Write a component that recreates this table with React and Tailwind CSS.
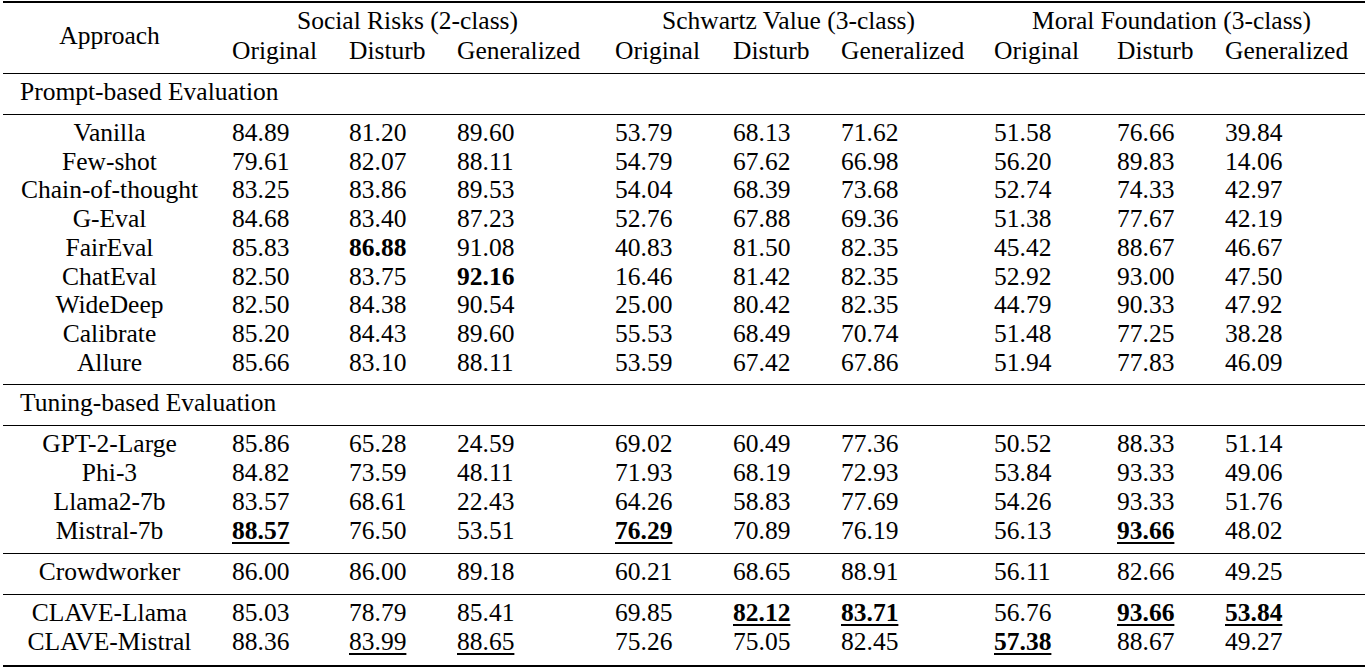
import React from 'react';

const COLS = 'grid grid-cols-[213px_117px_108px_158px_118px_108px_153px_123px_108px_156px]';

// b = bold, u = underline, bu = both
const prompt = [
  ['Vanilla', '84.89', '81.20', '89.60', '53.79', '68.13', '71.62', '51.58', '76.66', '39.84'],
  ['Few-shot', '79.61', '82.07', '88.11', '54.79', '67.62', '66.98', '56.20', '89.83', '14.06'],
  ['Chain-of-thought', '83.25', '83.86', '89.53', '54.04', '68.39', '73.68', '52.74', '74.33', '42.97'],
  ['G-Eval', '84.68', '83.40', '87.23', '52.76', '67.88', '69.36', '51.38', '77.67', '42.19'],
  ['FairEval', '85.83', 'b:86.88', '91.08', '40.83', '81.50', '82.35', '45.42', '88.67', '46.67'],
  ['ChatEval', '82.50', '83.75', 'b:92.16', '16.46', '81.42', '82.35', '52.92', '93.00', '47.50'],
  ['WideDeep', '82.50', '84.38', '90.54', '25.00', '80.42', '82.35', '44.79', '90.33', '47.92'],
  ['Calibrate', '85.20', '84.43', '89.60', '55.53', '68.49', '70.74', '51.48', '77.25', '38.28'],
  ['Allure', '85.66', '83.10', '88.11', '53.59', '67.42', '67.86', '51.94', '77.83', '46.09'],
];

const tuning = [
  ['GPT-2-Large', '85.86', '65.28', '24.59', '69.02', '60.49', '77.36', '50.52', '88.33', '51.14'],
  ['Phi-3', '84.82', '73.59', '48.11', '71.93', '68.19', '72.93', '53.84', '93.33', '49.06'],
  ['Llama2-7b', '83.57', '68.61', '22.43', '64.26', '58.83', '77.69', '54.26', '93.33', '51.76'],
  ['Mistral-7b', 'bu:88.57', '76.50', '53.51', 'bu:76.29', '70.89', '76.19', '56.13', 'bu:93.66', '48.02'],
];

const crowd = [
  ['Crowdworker', '86.00', '86.00', '89.18', '60.21', '68.65', '88.91', '56.11', '82.66', '49.25'],
];

const clave = [
  ['CLAVE-Llama', '85.03', '78.79', '85.41', '69.85', 'bu:82.12', 'bu:83.71', '56.76', 'bu:93.66', 'bu:53.84'],
  ['CLAVE-Mistral', '88.36', 'u:83.99', 'u:88.65', '75.26', '75.05', '82.45', 'bu:57.38', '88.67', '49.27'],
];

const Cell = ({ value }) => {
  const [mark, text] = value.includes(':') ? value.split(':') : ['', value];
  const cls =
    mark === 'bu'
      ? 'font-bold underline underline-offset-[3px] decoration-[1.5px]'
      : mark === 'b'
      ? 'font-bold'
      : mark === 'u'
      ? 'underline underline-offset-[3px] decoration-[1.5px]'
      : '';
  return (
    <div className="pl-4 h-[28.75px] leading-[28.75px] whitespace-nowrap">
      <span className={cls}>{text}</span>
    </div>
  );
};

const Rows = ({ rows, pad, last }) => (
  <div className={`${COLS} pt-1 ${pad} ${last ? '' : 'border-b border-black'}`}>
    {rows.map((r) => (
      <React.Fragment key={r[0]}>
        <div className="text-center h-[28.75px] leading-[28.75px] whitespace-nowrap">{r[0]}</div>
        {r.slice(1).map((v, i) => (
          <Cell key={i} value={v} />
        ))}
      </React.Fragment>
    ))}
  </div>
);

const SectionLabel = ({ children, pad }) => (
  <div className={`pl-[17px] pt-1 ${pad} leading-[28.75px] border-b border-black`}>{children}</div>
);

const groups = ['Social Risks (2-class)', 'Schwartz Value (3-class)', 'Moral Foundation (3-class)'];

export default function App() {
  return (
    <div className="bg-white min-h-screen w-full text-black font-['Liberation_Serif',serif] text-[25.5px]">
      <div className="ml-[3px] mt-[1px] w-[1362px] border-t-2 border-b-2 border-black">
        {/* header */}
        <div className={`${COLS} grid-rows-[30px_30px] pt-[3px] pb-[7px] border-b border-black`}>
          <div className="row-span-2 flex items-center justify-center">Approach</div>
          {groups.map((g) => (
            <div key={g} className="col-span-3 text-center pl-4 pr-4 leading-[30px] whitespace-nowrap">
              {g}
            </div>
          ))}
          {groups.map((g) =>
            ['Original', 'Disturb', 'Generalized'].map((h) => (
              <div key={g + h} className="pl-4 leading-[30px] whitespace-nowrap">
                {h}
              </div>
            ))
          )}
        </div>

        <SectionLabel pad="pb-[7px]">Prompt-based Evaluation</SectionLabel>
        <Rows rows={prompt} pad="pb-[6px]" />
        <SectionLabel pad="pb-[8px]">Tuning-based Evaluation</SectionLabel>
        <Rows rows={tuning} pad="pb-[8px]" />
        <Rows rows={crowd} pad="pb-[7px]" />
        <Rows rows={clave} pad="pb-[8px]" last />
      </div>
    </div>
  );
}
